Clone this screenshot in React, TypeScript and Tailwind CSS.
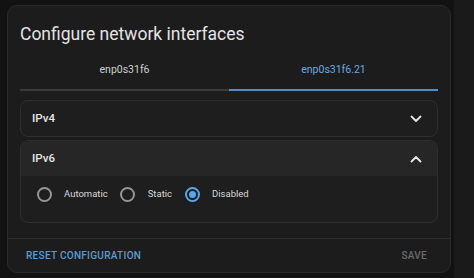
import React from "react";

const Chevron = ({ up }: { up?: boolean }) => (
  <svg width="12" height="8" viewBox="0 0 12 8" className={up ? "rotate-180" : ""}>
    <path d="M1.5 1.5 L6 6 L10.5 1.5" fill="none" stroke="#e6e6e6" strokeWidth="1.8" strokeLinecap="round" strokeLinejoin="round" />
  </svg>
);

const Radio = ({ checked, label }: { checked?: boolean; label: string }) => (
  <div className="flex items-center">
    <div className="w-[30px] h-[30px] flex items-center justify-center">
      <div
        className={
          "w-[15px] h-[15px] rounded-full border-2 flex items-center justify-center " +
          (checked ? "border-[#5aa6ea]" : "border-[#959595]")
        }
      >
        {checked && <div className="w-[7px] h-[7px] rounded-full bg-[#5aa6ea]" />}
      </div>
    </div>
    <span className="ml-[5px] text-[9.5px] text-[#d8d8d8]">{label}</span>
  </div>
);

export default function App() {
  return (
    <div className="w-[474px] h-[278px] bg-[#121212] flex overflow-hidden" style={{ fontFamily: "Roboto, 'Liberation Sans', sans-serif" }}>
      <div className="flex-1 pl-[7px] pt-[5px]">
        <div className="w-[444px] h-[268px] rounded-[10px] border border-[#2a2a2a] bg-[#1c1c1c] flex flex-col">
          <div className="pl-[12px] pt-[16px] text-[17.5px] leading-[24px] text-[#e3e3e3]">Configure network interfaces</div>
          <div className="mx-[12px] mt-[8px] flex">
            <div className="flex-1 flex flex-col">
              <div className="h-[35px] pb-[3px] flex items-center justify-center text-[10.5px] text-[#cfcfcf]">enp0s31f6</div>
              <div className="h-[2px] bg-[#3a3a3a]" />
            </div>
            <div className="flex-1 flex flex-col">
              <div className="h-[35px] pb-[3px] flex items-center justify-center text-[10.5px] text-[#6aa8e0]">enp0s31f6.21</div>
              <div className="h-[2px] bg-[#4f8fc8]" />
            </div>
          </div>
          <div className="mx-[12px] mt-[9px] h-[37px] rounded-[8px] border border-[#2e2e2e] bg-[#1e1e1e] flex items-center justify-between pl-[11px] pr-[15px]">
            <span className="text-[11.5px] font-medium text-[#e6e6e6]">IPv4</span>
            <Chevron />
          </div>
          <div className="mx-[12px] mt-[3px] h-[83px] rounded-[8px] border border-[#2e2e2e] bg-[#1e1e1e] flex flex-col overflow-hidden">
            <div className="h-[35px] bg-[#262626] flex items-center justify-between pl-[11px] pr-[15px]">
              <span className="text-[11.5px] font-medium text-[#e6e6e6]">IPv6</span>
              <Chevron up />
            </div>
            <div className="flex items-center pl-[8px] pt-[3px] gap-[5px]">
              <Radio label="Automatic" />
              <Radio label="Static" />
              <Radio checked label="Disabled" />
            </div>
          </div>
          <div className="mt-[15px] h-px bg-[#2e2e2e]" />
          <div className="flex-1 flex items-center justify-between pl-[18px] pr-[23px]">
            <span className="text-[10px] font-medium tracking-[0.03em] text-[#5b9bd3]">RESET CONFIGURATION</span>
            <span className="text-[10px] font-medium tracking-[0.03em] text-[#6a6a6a]">SAVE</span>
          </div>
        </div>
      </div>
      <div className="w-[20px] bg-[#1a1a1a]" />
    </div>
  );
}
